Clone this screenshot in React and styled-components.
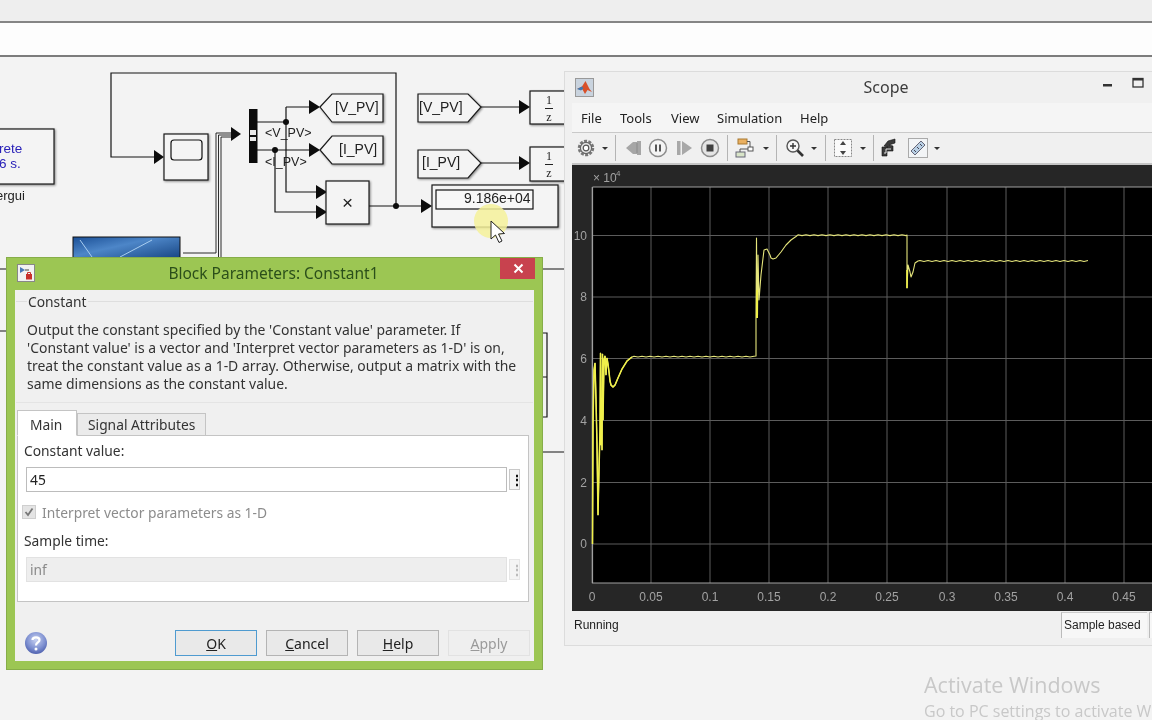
import React from "react";
import styled, { createGlobalStyle } from "styled-components";

const GlobalStyle = createGlobalStyle`
	html, body {
		margin: 0;
		padding: 0;
		background: #f3f3f3;
	}
	* {
		box-sizing: border-box;
	}
`;

const uiFont = `"Noto Sans", "Open Sans", sans-serif`;

// ---- curve of the scope, in page coordinates
const ripple = (x0, x1, y, amp, step) => {
	const pts = [];
	for (let x = x0, i = 0; x <= x1; x += step, i++) {
		pts.push(`${x.toFixed(1)},${(y + (i % 2 ? amp : -amp)).toFixed(1)}`);
	}
	return pts;
};

const startChatter =
	"592.5,544 593,425 594,370 595,363 596,400 597,445 598,515 599,470 600,430 600.5,353 601,445 601.5,400 602,450 602.5,354 603,420 604,360 605,356 606,375 607,358 608,364 609,372 610,381 611,385 613,387 615,385 618,378 622,369 627,361 632,357";
const stepUp =
	"756,356 756,316 756.5,238 757,300 757.5,315 758,255 759,300 761,275 764,250 767,249 770,255 771,258 773,259 776,258 781,252 786,245 791,240 796,236.5";
const stepDown = "907,235 907,288 908,265 910,272 911,277 913,272 915,263 918,261";
const curve = [
	startChatter,
	...ripple(634, 755, 356.6, 0.4, 4),
	stepUp,
	...ripple(798, 906, 235.2, 0.4, 4),
	stepDown,
	...ripple(920, 1088, 261, 0.5, 4),
].join(" ");

const xTicks = [
	["0", 592],
	["0.05", 651],
	["0.1", 710],
	["0.15", 769],
	["0.2", 828],
	["0.25", 887],
	["0.3", 947],
	["0.35", 1006],
	["0.4", 1065],
	["0.45", 1124],
];
const yTicks = [
	["10", 235.5],
	["8", 297],
	["6", 358.5],
	["4", 420.5],
	["2", 482.5],
	["0", 544],
];

const App = () => {
	return (
		<Page>
			<GlobalStyle />
			<TopBar />
			<AddressBar />
			<Canvas>
				<Diagram />
				<ScopeWindow />
				<BlockDialog />
				<Watermark>
					<WatermarkTitle>Activate Windows</WatermarkTitle>
					<WatermarkSub>Go to PC settings to activate Windows.</WatermarkSub>
				</Watermark>
			</Canvas>
		</Page>
	);
};

// ---- simulink model
const Diagram = () => {
	return (
		<DiagramSvg viewBox='0 57 1152 663'>
			<defs>
				<linearGradient id='panelBlue' x1='0' y1='0' x2='1' y2='1'>
					<stop offset='0' stopColor='#1a4f96' />
					<stop offset='0.4' stopColor='#4d86c8' />
					<stop offset='1' stopColor='#123f7c' />
				</linearGradient>
			</defs>

			<Wire d='M396 206 V73 H111 V157 H156' />
			<Wire d='M257 122 H286 M286 107 H312 M286 107 V192 H318' />
			<Wire d='M257 150 H311 M275 150 V212 H318' />
			<Wire d='M369 206 H424' />
			<Wire d='M481 107 H522 M481 163 H522' />
			<ThinWire d='M183 253 H216 V133 H232' />
			<ThinWire d='M218.500 257 V135 H232' />
			<ThinWire d='M221 257 V137 H232' />
			<Wire d='M0 269 H8 M540 269 H564 M0 331 H8 M540 452 H564' />
			<Wire d='M540 333 H547 V417 H540 M540 377 H547' />

			<ArrowHead points='154,150 154,164 164,157' />
			<ArrowHead points='231,127 231,141 241,134' />
			<ArrowHead points='309,100 309,114 320,107' />
			<ArrowHead points='309,143 309,157 320,150' />
			<ArrowHead points='316,185 316,199 327,192' />
			<ArrowHead points='316,205 316,219 327,212' />
			<ArrowHead points='421,199 421,213 432,206' />
			<ArrowHead points='519,100 519,114 530,107' />
			<ArrowHead points='519,156 519,170 530,163' />
			<Dot cx='286' cy='122' r='3' />
			<Dot cx='275' cy='150' r='3' />
			<Dot cx='396' cy='206' r='3' />

			<BlockGroup>
				<BlockBox x='-10' y='129' width='64' height='55' />
				<BlockBox x='164' y='134' width='44' height='46' />
				<BlockBox as='polygon' points='320,107 332,94 383,94 383,122 332,122' />
				<BlockBox as='polygon' points='320,150 332,136 383,136 383,164 332,164' />
				<BlockBox x='326' y='181' width='43' height='43' />
				<BlockBox as='polygon' points='418,94 468,94 481,107 468,122 418,122' />
				<BlockBox as='polygon' points='418,150 468,150 481,163 468,178 418,178' />
				<BlockBox x='530' y='91' width='40' height='33' />
				<BlockBox x='530' y='147' width='40' height='34' />
				<BlockBox x='432' y='185' width='126' height='42' />
			</BlockGroup>

			<rect x='171' y='140' width='31' height='20' rx='3' fill='#f4f4f4' stroke='#111' strokeWidth='1.2' />
			<rect x='249' y='109' width='8.5' height='54' fill='#0b0b0b' />
			<rect x='250' y='130' width='6' height='5' fill='#e8e8e8' />
			<rect x='250' y='137' width='6' height='4' fill='#e8e8e8' />
			<rect x='436' y='190' width='97' height='19' fill='#f7f7f7' stroke='#111' strokeWidth='1.2' />

			<rect x='73' y='237' width='107' height='24' fill='url(#panelBlue)' stroke='#111' />
			<path d='M80 240 L92 257 M120 257 L152 240' stroke='#a8cdf0' strokeWidth='1' fill='none' />

			<BlueText x='-1' y='153'>rete</BlueText>
			<BlueText x='-1' y='168'>6 s.</BlueText>
			<BlockText x='-4' y='200'>ergui</BlockText>
			<BlockText x='265' y='137' $size={12.5}>&lt;V_PV&gt;</BlockText>
			<BlockText x='265' y='166' $size={12.5}>&lt;I_PV&gt;</BlockText>
			<BlockText x='335' y='112' $size={14}>[V_PV]</BlockText>
			<BlockText x='339' y='154' $size={14}>[I_PV]</BlockText>
			<BlockText x='419' y='112' $size={14}>[V_PV]</BlockText>
			<BlockText x='422' y='167' $size={14}>[I_PV]</BlockText>
			<BlockText x='464' y='203' $size={14}>9.186e+04</BlockText>
			<BlockText x='342' y='209' $size={19}>×</BlockText>

			<FracText x='549' y='104'>1</FracText>
			<path d='M545 108.500 H553' stroke='#222' fill='none' />
			<FracText x='549' y='121'>z</FracText>
			<FracText x='549' y='160'>1</FracText>
			<path d='M545 164.500 H553' stroke='#222' fill='none' />
			<FracText x='549' y='177'>z</FracText>

			<circle cx='491' cy='221' r='17' fill='#f4f19a' opacity='0.85' />
			<path
				d='M491 221 V239 L495.500 235 L499 242.500 L502 241 L498.500 234 L504.500 233.500 Z'
				fill='#fff'
				stroke='#222'
				strokeWidth='1'
			/>
		</DiagramSvg>
	);
};

// ---- scope figure
const ScopeWindow = () => {
	return (
		<ScopeFrame>
			<ScopeTitleBar>
				<MatlabIcon />
				<ScopeTitle>Scope</ScopeTitle>
				<WindowButton $left={0}>
					<svg width='12' height='12' viewBox='0 0 12 12'>
						<rect x='1' y='7' width='9' height='2.500' fill='#333' />
					</svg>
				</WindowButton>
				<WindowButton $left={18}>
					<svg width='12' height='12' viewBox='0 0 12 12'>
						<rect x='1' y='1.500' width='10' height='8.500' fill='none' stroke='#333' strokeWidth='1.300' />
						<rect x='1' y='1.500' width='10' height='2' fill='#333' />
					</svg>
				</WindowButton>
			</ScopeTitleBar>
			<MenuBar>
				<MenuItem $w={39}>File</MenuItem>
				<MenuItem $w={51}>Tools</MenuItem>
				<MenuItem $w={46}>View</MenuItem>
				<MenuItem $w={83}>Simulation</MenuItem>
				<MenuItem $w={40}>Help</MenuItem>
			</MenuBar>
			<ToolBar>
				<ToolSlot $left={4}><GearIcon /></ToolSlot>
				<Caret $left={4} />
				<ToolSep $left={5} />
				<ToolSlot $left={8}><BackIcon /></ToolSlot>
				<ToolSlot $left={4}><PauseIcon /></ToolSlot>
				<ToolSlot $left={6}><StepIcon /></ToolSlot>
				<ToolSlot $left={6}><StopIcon /></ToolSlot>
				<ToolSep $left={7} />
				<ToolSlot $left={7}><ModelIcon /></ToolSlot>
				<Caret $left={6} />
				<ToolSep $left={5} />
				<ToolSlot $left={8}><ZoomIcon /></ToolSlot>
				<Caret $left={4} />
				<ToolSep $left={6} />
				<ToolSlot $left={7}><FitIcon /></ToolSlot>
				<Caret $left={5} />
				<ToolSep $left={5} />
				<ToolSlot $left={5}><HighlightIcon /></ToolSlot>
				<ToolSlot $left={9}><RulerIcon /></ToolSlot>
				<Caret $left={4} />
			</ToolBar>
			<PlotSvg viewBox='572 165 628 446'>
				<rect x='572' y='165' width='628' height='446' fill='#262626' />
				<rect x='592.500' y='187' width='610' height='396' fill='#000' />
				{xTicks.map(([, x]) => (
					<GridLine key={x} x1={x} x2={x} y1='187' y2='583' />
				))}
				{yTicks.map(([, y]) => (
					<GridLine key={y} x1='592' x2='1200' y1={y} y2={y} />
				))}
				<path d='M592.500 187 H1200 M592.500 187 V583 H1200' fill='none' stroke='#a0a0a0' strokeWidth='1.200' />
				<polyline points={curve} fill='none' stroke='#e6e67c' strokeWidth='1.100' strokeLinejoin='round' />
				<polyline points={startChatter} fill='none' stroke='#f0f04a' strokeWidth='1.500' />
				<path d='M757 318 V290' stroke='#f0f04a' strokeWidth='2' fill='none' />
				<path d='M907 270 V288' stroke='#f0f04a' strokeWidth='1.600' fill='none' />
				{xTicks.map(([label, x]) => (
					<TickText key={label} x={x} y='601' textAnchor='middle'>{label}</TickText>
				))}
				{yTicks.map(([label, y]) => (
					<TickText key={label} x='587' y={y + 4} textAnchor='end'>{label}</TickText>
				))}
				<TickText x='593' y='182'>× 10</TickText>
				<TickText x='616' y='176' $size={8}>4</TickText>
			</PlotSvg>
			<StatusBar>
				<StatusText>Running</StatusText>
				<StatusCell $w={86}>Sample based</StatusCell>
				<StatusCell $w={51} $left={2}>T=0.420</StatusCell>
			</StatusBar>
		</ScopeFrame>
	);
};

// ---- block parameters dialog
const BlockDialog = () => {
	return (
		<DialogFrame>
			<DialogTitleBar>
				<ModelLockIcon />
				<DialogTitle>Block Parameters: Constant1</DialogTitle>
				<CloseButton>
					<svg width='11' height='11' viewBox='0 0 11 11'>
						<path d='M1.500 1.500 L9.500 9.500 M9.500 1.500 L1.500 9.500' stroke='#fff' strokeWidth='2' />
					</svg>
				</CloseButton>
			</DialogTitleBar>
			<DialogClient>
				<GroupBox>
					<Legend>Constant</Legend>
					<Description>
						Output the constant specified by the 'Constant value' parameter. If
						<br />
						'Constant value' is a vector and 'Interpret vector parameters as 1-D' is on,
						<br />
						treat the constant value as a 1-D array. Otherwise, output a matrix with the
						<br />
						same dimensions as the constant value.
					</Description>
				</GroupBox>
				<TabRow>
					<Tab $active>Main</Tab>
					<Tab>Signal Attributes</Tab>
				</TabRow>
				<TabPanel>
					<FieldLabel>Constant value:</FieldLabel>
					<FieldRow>
						<FieldInput>45</FieldInput>
						<FieldMenu>⋮</FieldMenu>
					</FieldRow>
					<CheckRow>
						<CheckBox>
							<svg width='10' height='10' viewBox='0 0 10 10'>
								<path d='M1.500 5 L4 8 L8.500 1.500' fill='none' stroke='#777' strokeWidth='1.800' />
							</svg>
						</CheckBox>
						Interpret vector parameters as 1-D
					</CheckRow>
					<FieldLabel $top={11}>Sample time:</FieldLabel>
					<FieldRow>
						<FieldInput $disabled>inf</FieldInput>
						<FieldMenu $disabled>⋮</FieldMenu>
					</FieldRow>
				</TabPanel>
				<DialogFooter>
					<HelpIcon />
					<ButtonRow>
						<DialogButton $primary><u>O</u>K</DialogButton>
						<DialogButton><u>C</u>ancel</DialogButton>
						<DialogButton><u>H</u>elp</DialogButton>
						<DialogButton $disabled><u>A</u>pply</DialogButton>
					</ButtonRow>
				</DialogFooter>
			</DialogClient>
		</DialogFrame>
	);
};

// ---- small drawn icons
const MatlabIcon = () => (
	<svg width='19' height='19' viewBox='0 0 19 19'>
		<rect x='0.500' y='0.500' width='18' height='18' fill='#c9d3de' stroke='#999' />
		<path d='M2 11 L7 8.500 L10.500 3 L14.500 11 L17 14 L12.500 12 L10 16 L7.500 11.500 Z' fill='#d8502a' />
		<path d='M2 11 L7 8.500 L8.500 10.500 L6 12.500 Z' fill='#3f78b0' />
	</svg>
);

const ModelLockIcon = () => (
	<svg width='18' height='18' viewBox='0 0 18 18'>
		<rect x='0.500' y='0.500' width='17' height='17' fill='#f2f2f2' stroke='#888' />
		<path d='M3 3 L8 6 L3 9 Z' fill='#4a78b8' />
		<path d='M8 6 H12' stroke='#444' fill='none' />
		<rect x='9' y='10' width='6' height='5.500' fill='#c9302c' />
		<path d='M10.500 10 V8.500 H13.500 V10' fill='none' stroke='#c9302c' />
	</svg>
);

const HelpIcon = () => (
	<svg width='24' height='24' viewBox='0 0 24 24'>
		<defs>
			<radialGradient id='helpBall' cx='0.500' cy='0.350' r='0.700'>
				<stop offset='0' stopColor='#c9d2f2' />
				<stop offset='0.600' stopColor='#7d8fd0' />
				<stop offset='1' stopColor='#4658a8' />
			</radialGradient>
		</defs>
		<circle cx='12' cy='12' r='11' fill='url(#helpBall)' />
		<path d='M8.500 9 C8.500 5.500 15.500 5.500 15.500 9 C15.500 11.500 12 11.500 12 14.500' fill='none' stroke='#fff' strokeWidth='2.200' />
		<circle cx='12' cy='18' r='1.500' fill='#fff' />
	</svg>
);

const GearIcon = () => (
	<svg width='20' height='20' viewBox='0 0 20 20'>
		<circle cx='10' cy='10' r='7' fill='none' stroke='#777' strokeWidth='2.500' strokeDasharray='3 1.400' />
		<circle cx='10' cy='10' r='5.600' fill='#e8e8e8' stroke='#666' strokeWidth='1.200' />
		<circle cx='10' cy='10' r='2.800' fill='#fff' stroke='#555' strokeWidth='1.200' />
	</svg>
);

const BackIcon = () => (
	<svg width='20' height='20' viewBox='0 0 20 20'>
		<path d='M2 10 L9 4 H13 V3 H17 V17 H13 V16 H9 Z' fill='#a6a6a6' />
		<path d='M13 5 V15' stroke='#8a8a8a' fill='none' />
	</svg>
);

const PauseIcon = () => (
	<svg width='20' height='20' viewBox='0 0 20 20'>
		<circle cx='10' cy='10' r='8.500' fill='#f4f4f4' stroke='#8d8d8d' strokeWidth='1.500' />
		<rect x='7' y='6.500' width='2' height='7' fill='#555' />
		<rect x='11' y='6.500' width='2' height='7' fill='#555' />
	</svg>
);

const StepIcon = () => (
	<svg width='20' height='20' viewBox='0 0 20 20'>
		<rect x='3' y='3' width='3.500' height='14' fill='#a8a8a8' />
		<path d='M8 3 L18 10 L8 17 Z' fill='#a8a8a8' />
	</svg>
);

const StopIcon = () => (
	<svg width='20' height='20' viewBox='0 0 20 20'>
		<circle cx='10' cy='10' r='8.500' fill='#e4e4e4' stroke='#8d8d8d' strokeWidth='1.500' />
		<rect x='6.500' y='6.500' width='7' height='7' fill='#3f3f3f' />
	</svg>
);

const ModelIcon = () => (
	<svg width='20' height='20' viewBox='0 0 20 20'>
		<rect x='3' y='1' width='9' height='5' fill='#eab060' stroke='#a87830' />
		<rect x='1' y='14' width='9' height='5' fill='#d8e4c8' stroke='#667' />
		<rect x='13' y='9' width='5' height='4' fill='#fff' stroke='#555' />
		<path d='M12 3.500 H15 V9 M13 11 H5 V14' fill='none' stroke='#555' />
	</svg>
);

const ZoomIcon = () => (
	<svg width='20' height='20' viewBox='0 0 20 20'>
		<circle cx='8' cy='8' r='6' fill='#f6f6f6' stroke='#555' strokeWidth='1.400' />
		<path d='M5 8 H11 M8 5 V11' stroke='#333' strokeWidth='1.400' fill='none' />
		<path d='M12.500 12.500 L18 18' stroke='#333' strokeWidth='2.600' fill='none' />
	</svg>
);

const FitIcon = () => (
	<svg width='20' height='20' viewBox='0 0 20 20'>
		<rect x='1.500' y='1.500' width='17' height='17' fill='#fafafa' stroke='#888' strokeDasharray='2 1' />
		<path d='M10 3 L7 7 H13 Z M10 17 L7 13 H13 Z' fill='#444' />
	</svg>
);

const HighlightIcon = () => (
	<svg width='20' height='20' viewBox='0 0 20 20'>
		<path d='M16 1 L9 3 L5 8 L9 9 H3 V18 H8 V13 H14 V8 L10 7 L16 5 Z' fill='#3a3a3a' stroke='#111' strokeWidth='0.600' />
		<path d='M5 15 H7 V11 H12' fill='none' stroke='#ddd' />
	</svg>
);

const RulerIcon = () => (
	<svg width='20' height='20' viewBox='0 0 20 20'>
		<rect x='0.500' y='0.500' width='19' height='19' fill='#f2f4f6' stroke='#aaa' />
		<path d='M3 13 L13 3 L17 7 L7 17 Z' fill='#b8cfe4' stroke='#667' />
		<path d='M6 12 L8 14 M9 9 L11 11 M12 6 L14 8' stroke='#445' fill='none' />
	</svg>
);

// ---- page
const Page = styled.div`
	width: 1152px;
	height: 720px;
	overflow: hidden;
	display: flex;
	flex-direction: column;
	background: #f3f3f3;
	filter: blur(0.35px);
`;

const TopBar = styled.div`
	height: 23px;
	flex: none;
	background: #eeeeee;
	border-bottom: 2px solid #858585;
`;

const AddressBar = styled.div`
	height: 34px;
	flex: none;
	background: #fdfdfd;
	border-bottom: 2px solid #7c7c7c;
`;

const Canvas = styled.div`
	position: relative;
	flex: 1;
	overflow: hidden;
	background: #f3f3f3;
`;

const DiagramSvg = styled.svg`
	display: block;
	width: 1152px;
	height: 663px;
`;

const Wire = styled.path`
	fill: none;
	stroke: #151515;
	stroke-width: 1.2;
`;

const ThinWire = styled(Wire)`
	stroke-width: 0.9;
`;

const ArrowHead = styled.polygon`
	fill: #0c0c0c;
`;

const Dot = styled.circle`
	fill: #0c0c0c;
`;

const BlockGroup = styled.g`
	filter: drop-shadow(1.5px 1.5px 1px rgba(0, 0, 0, 0.45));
`;

const BlockBox = styled.rect`
	fill: #f4f4f4;
	stroke: #1a1a1a;
	stroke-width: 1.2;
`;

const BlockText = styled.text`
	font-family: "Liberation Sans", Arial, sans-serif;
	font-size: ${(props) => props.$size || 13}px;
	fill: #222;
`;

const BlueText = styled(BlockText)`
	font-size: 13.5px;
	fill: #2a22b8;
`;

const FracText = styled.text`
	font-family: "Liberation Serif", serif;
	font-size: 12px;
	text-anchor: middle;
	fill: #222;
`;

// ---- scope
const ScopeFrame = styled.div`
	position: absolute;
	left: 564px;
	top: 14px;
	width: 644px;
	height: 575px;
	display: flex;
	flex-direction: column;
	padding: 0 7px 6px;
	background: #f0f0f0;
	border: 1px solid #dcdcdc;
	font-family: ${uiFont};
`;

const ScopeTitleBar = styled.div`
	position: relative;
	height: 31px;
	flex: none;
	display: flex;
	align-items: center;
	padding: 0 56px 1px 3px;
`;

const ScopeTitle = styled.div`
	position: absolute;
	left: 0;
	right: 0;
	top: 4px;
	text-align: center;
	font-size: 16px;
	color: #3c3c3c;
`;

const WindowButton = styled.div`
	margin: 0 0 8px ${(props) => (props.$left ? `${props.$left}px` : "auto")};
	display: flex;
`;

const MenuBar = styled.div`
	height: 30px;
	flex: none;
	display: flex;
	align-items: center;
	padding-left: 9px;
	background: #f5f5f5;
	border-bottom: 1px solid #c9c9c9;
`;

const MenuItem = styled.div`
	width: ${(props) => props.$w}px;
	font-size: 13px;
	color: #222;
`;

const ToolBar = styled.div`
	height: 32px;
	flex: none;
	display: flex;
	align-items: center;
	background: #f0f0f0;
	border-bottom: 2px solid #c4c4c4;
`;

const ToolSlot = styled.div`
	width: 20px;
	height: 20px;
	flex: none;
	margin-left: ${(props) => props.$left}px;
	svg {
		display: block;
	}
`;

const Caret = styled.div`
	width: 10px;
	flex: none;
	margin-left: ${(props) => props.$left}px;
	display: flex;
	justify-content: center;
	&::after {
		content: "";
		border-left: 3px solid transparent;
		border-right: 3px solid transparent;
		border-top: 3.5px solid #333;
	}
`;

const ToolSep = styled.div`
	width: 1px;
	height: 26px;
	flex: none;
	margin-left: ${(props) => props.$left}px;
	background: #b4b4b4;
`;

const PlotSvg = styled.svg`
	display: block;
	flex: none;
	width: 628px;
	height: 446px;
`;

const GridLine = styled.line`
	stroke: #5c5c5c;
	stroke-width: 1;
`;

const TickText = styled.text`
	font-family: "Liberation Sans", Arial, sans-serif;
	font-size: ${(props) => props.$size || 12}px;
	fill: #a2a2a2;
`;

const StatusBar = styled.div`
	flex: 1;
	display: flex;
	align-items: center;
	padding-left: 2px;
	font-size: 12px;
	color: #222;
	font-family: "Liberation Sans", Arial, sans-serif;
`;

const StatusText = styled.div`
	margin-right: auto;
`;

const StatusCell = styled.div`
	width: ${(props) => props.$w}px;
	margin-left: ${(props) => props.$left || 0}px;
	height: 26px;
	padding: 5px 0 0 2px;
	background: #f7f7f7;
	border-left: 1px solid #bbb;
	border-top: 1px solid #ccc;
	white-space: nowrap;
	overflow: hidden;
`;

// ---- dialog
const DialogFrame = styled.div`
	position: absolute;
	left: 6px;
	top: 200px;
	width: 537px;
	height: 413px;
	display: flex;
	flex-direction: column;
	padding: 0 8px 8px;
	background: #9cc653;
	border: 1px solid #86ad48;
	font-family: ${uiFont};
`;

const DialogTitleBar = styled.div`
	height: 32px;
	flex: none;
	display: grid;
	grid-template-columns: 35px 1fr 35px;
	align-items: center;
	margin-right: -1px;
	padding-bottom: 3px;
	svg {
		display: block;
		margin-left: 2px;
	}
`;

const DialogTitle = styled.div`
	text-align: center;
	padding-right: 3px;
	font-size: 15.5px;
	color: #2b4f1a;
`;

const CloseButton = styled.div`
	align-self: start;
	width: 35px;
	height: 21px;
	display: flex;
	align-items: center;
	justify-content: center;
	background: #c8424e;
`;

const DialogClient = styled.div`
	flex: 1;
	display: flex;
	flex-direction: column;
	background: #f0f0f0;
	font-size: 13.8px;
	color: #333;
	overflow: hidden;
`;

const GroupBox = styled.div`
	margin: 11px 1px 0;
	padding: 0 0 9px 11px;
	border-top: 1px solid #dedede;
	border-bottom: 1px solid #e4e4e4;
`;

const Legend = styled.div`
	width: fit-content;
	margin-top: -9px;
	padding: 0 2px 0 1px;
	line-height: 18px;
	background: #f0f0f0;
`;

const Description = styled.p`
	margin: 10px 0 0;
	font-size: 13.95px;
	line-height: 18px;
	white-space: nowrap;
`;

const TabRow = styled.div`
	position: relative;
	z-index: 1;
	display: flex;
	align-items: flex-end;
	margin: 7px 0 -1px 2px;
`;

const Tab = styled.div`
	height: ${(props) => (props.$active ? 26 : 23)}px;
	padding: ${(props) => (props.$active ? "0 12px" : "0 10px")};
	line-height: ${(props) => (props.$active ? 27 : 21)}px;
	background: ${(props) => (props.$active ? "#fff" : "#ebebeb")};
	border: 1px solid #c4c4c4;
	border-bottom: ${(props) => (props.$active ? "1px solid #fff" : "1px solid #c4c4c4")};
	color: #333;
	width: ${(props) => (props.$active ? 60 : 129)}px;
	white-space: nowrap;
`;

const TabPanel = styled.div`
	width: 512px;
	height: 167px;
	margin-left: 2px;
	padding: 6px 6px 0;
	background: #fff;
	border: 1px solid #c4c4c4;
`;

const FieldLabel = styled.div`
	margin-top: ${(props) => props.$top || 0}px;
	line-height: 18px;
`;

const FieldRow = styled.div`
	display: flex;
	align-items: center;
	gap: 2px;
	margin: 7px 0 0 2px;
`;

const FieldInput = styled.div`
	width: 481px;
	height: 25px;
	padding-left: 3px;
	line-height: 23px;
	background: ${(props) => (props.$disabled ? "#eeeeee" : "#fff")};
	border: 1px solid ${(props) => (props.$disabled ? "#e2e2e2" : "#bcbcbc")};
	color: ${(props) => (props.$disabled ? "#8a8a8a" : "#222")};
`;

const FieldMenu = styled.div`
	width: 11px;
	height: 21px;
	line-height: 19px;
	text-align: center;
	font-size: 14px;
	font-weight: 700;
	background: #f4f4f4;
	border: 1px solid ${(props) => (props.$disabled ? "#e6e6e6" : "#c8c8c8")};
	color: ${(props) => (props.$disabled ? "#bbb" : "#111")};
`;

const CheckRow = styled.div`
	display: flex;
	align-items: center;
	gap: 6px;
	height: 18px;
	margin: 11px 0 0 -2px;
	color: #8c8c8c;
`;

const CheckBox = styled.div`
	width: 14px;
	height: 14px;
	display: flex;
	align-items: center;
	justify-content: center;
	background: #e4e4e4;
	border: 1px solid #cfcfcf;
`;

const DialogFooter = styled.div`
	flex: 1;
	display: flex;
	align-items: flex-start;
	padding: 28px 4px 0 9px;
	svg {
		display: block;
		margin-top: 1px;
	}
`;

const ButtonRow = styled.div`
	display: flex;
	gap: 9px;
	margin-left: auto;
`;

const DialogButton = styled.div`
	width: 82px;
	height: 26px;
	line-height: 25px;
	text-align: center;
	font-size: 14px;
	background: ${(props) => (props.$disabled ? "#efefef" : "#e9e9e9")};
	border: 1px solid ${(props) => (props.$primary ? "#4f9bd0" : props.$disabled ? "#e2e2e2" : "#b4b4b4")};
	color: ${(props) => (props.$disabled ? "#9a9a9a" : "#222")};
`;

const Watermark = styled.div`
	position: absolute;
	left: 924px;
	top: 614px;
	white-space: nowrap;
	font-family: "Open Sans", "Noto Sans", sans-serif;
	color: #c8c8c8;
`;

const WatermarkTitle = styled.div`
	font-size: 21.5px;
	line-height: 28px;
`;

const WatermarkSub = styled.div`
	font-size: 16px;
	line-height: 24px;
`;

export default App;
